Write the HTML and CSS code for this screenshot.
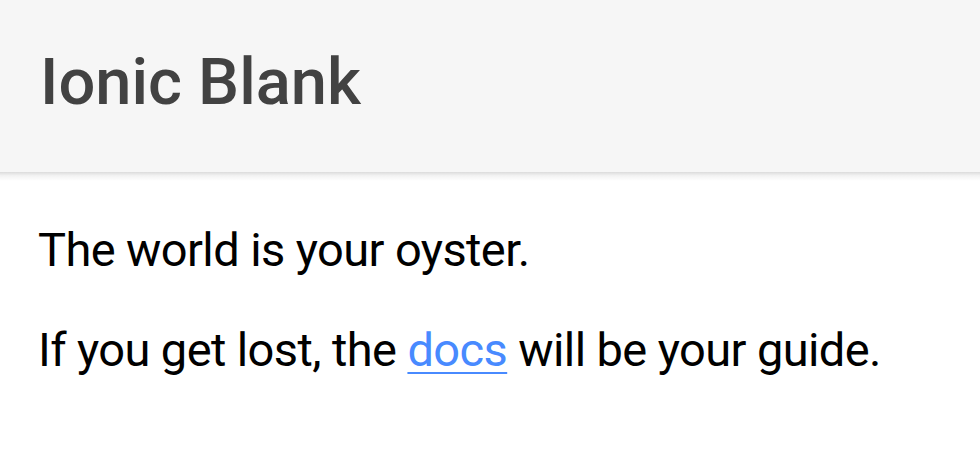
FILE: index.html
```html
<!DOCTYPE html>
<html lang="en">
<head>
<meta charset="utf-8">
<title>Ionic Blank</title>
<link rel="stylesheet" href="styles.css">
</head>
<body>
<header class="header">
  <div class="toolbar">
    <h1 class="title">Ionic Blank</h1>
  </div>
</header>
<main class="content">
  <p class="text">The world is your oyster.</p>
  <p class="text">If you get lost, the <a class="link" href="#">docs</a> will be your guide.</p>
</main>
</body>
</html>
```

FILE: styles.css
```css
html, body {
  margin: 0;
  padding: 0;
  background: #ffffff;
  font-family: Roboto, "Noto Sans", Arial, sans-serif;
}

.header {
  position: relative;
}

.header::after {
  content: "";
  position: absolute;
  left: 0;
  right: 0;
  top: 100%;
  height: 9px;
  background: linear-gradient(to bottom, rgba(0,0,0,0.14), rgba(0,0,0,0.05) 40%, rgba(0,0,0,0));
}

.toolbar {
  height: 172px;
  background: #f6f6f6;
  display: flex;
  align-items: center;
  padding: 0 40px 9px;
  box-sizing: border-box;
}

.title {
  margin: 0;
  font-size: 65px;
  line-height: 64px;
  font-weight: 500;
  color: #424242;
}

.content {
  padding: 48px 38px;
}

.text {
  margin: 0 0 40px;
  font-size: 47px;
  line-height: 60px;
  letter-spacing: -0.6px;
  color: #000000;
}

.link {
  color: #488aff;
  text-decoration: underline;
  text-decoration-thickness: 2px;
  text-underline-offset: 6px;
}
```
